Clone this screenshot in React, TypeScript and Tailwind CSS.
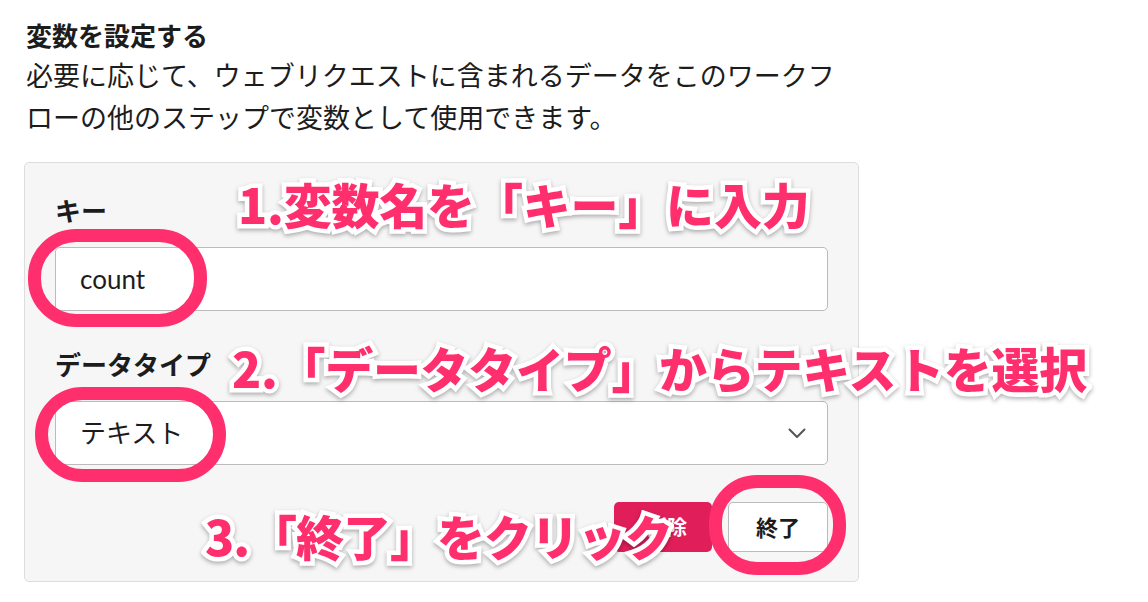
import React from 'react'

const Annotation = ({ className, children }: { className: string; children: React.ReactNode }) => (
    <div
        className={`absolute whitespace-nowrap text-[48px] leading-none font-black text-[#ff2f6e] [font-family:'Noto_Sans_CJK_JP',sans-serif] [-webkit-text-stroke:9px_white] [paint-order:stroke_fill] drop-shadow-[0_2px_2px_rgba(0,0,0,0.3)] ${className}`}
    >
        {children}
    </div>
)

const Ring = ({ className }: { className: string }) => (
    <div className={`absolute border-[13px] border-[#ff2f6e] rounded-[48px] ${className}`} />
)

const App = () => {
    return (
        <div className="relative w-[1148px] h-[602px] bg-white overflow-hidden text-[#1d1c1d] [font-family:Lato,'Noto_Sans_CJK_JP',sans-serif] pt-[17px] pl-[24px]">
            <div className="pl-[2px]">
                <h1 className="text-[26px] leading-[38px] font-bold">変数を設定する</h1>
                <p className="text-[27px] leading-[42px]">
                    <span className="block whitespace-nowrap">必要に応じて、ウェブリクエストに含まれるデータをこのワークフ</span>
                    <span className="block whitespace-nowrap">ローの他のステップで変数として使用できます。</span>
                </p>
            </div>

            <div className="mt-[23px] w-[835px] bg-[#f6f6f6] border border-[#dddddd] rounded-[5px] px-[30px] pt-[31px] pb-[29px] flex flex-col">
                <label className="text-[26px] leading-[34px] font-bold mb-[19px]">キー</label>
                <div className="h-[64px] bg-white border border-[#bbbbbb] rounded-[5px] flex items-center pl-[24px] text-[26px]">
                    count
                </div>

                <label className="text-[26px] leading-[34px] font-bold mt-[37px] mb-[19px]">データタイプ</label>
                <div className="h-[64px] bg-white border border-[#bbbbbb] rounded-[5px] flex items-center justify-between pl-[24px] pr-[21px] text-[26px]">
                    <span>テキスト</span>
                    <svg width="18" height="11" viewBox="0 0 18 11" fill="none">
                        <path d="M1.5 1.5 9 9l7.5-7.5" stroke="#555555" strokeWidth="2" strokeLinecap="round" strokeLinejoin="round" />
                    </svg>
                </div>

                <div className="flex justify-end gap-[16px] mt-[37px]">
                    <button className="w-[98px] h-[50px] rounded-[5px] bg-[#e01e5a] text-white text-[20px] font-bold pl-[8px]">削除</button>
                    <button className="w-[100px] h-[50px] rounded-[5px] bg-white border border-[#bbbbbb] text-[22px] font-bold">終了</button>
                </div>
            </div>

            <Ring className="left-[28px] top-[229px] w-[179px] h-[98px]" />
            <Ring className="left-[35px] top-[387px] w-[191px] h-[95px]" />
            <Ring className="left-[709px] top-[475px] w-[137px] h-[100px]" />

            <Annotation className="left-[238px] top-[179px] tracking-[-0.2px]">1.変数名を「キー」に入力</Annotation>
            <Annotation className="left-[232px] top-[343px] tracking-[-0.3px]">2.「データタイプ」からテキストを選択</Annotation>
            <Annotation className="left-[205px] top-[511px] tracking-[-1px]">3.「終了」をクリック</Annotation>
        </div>
    )
}

export default App
